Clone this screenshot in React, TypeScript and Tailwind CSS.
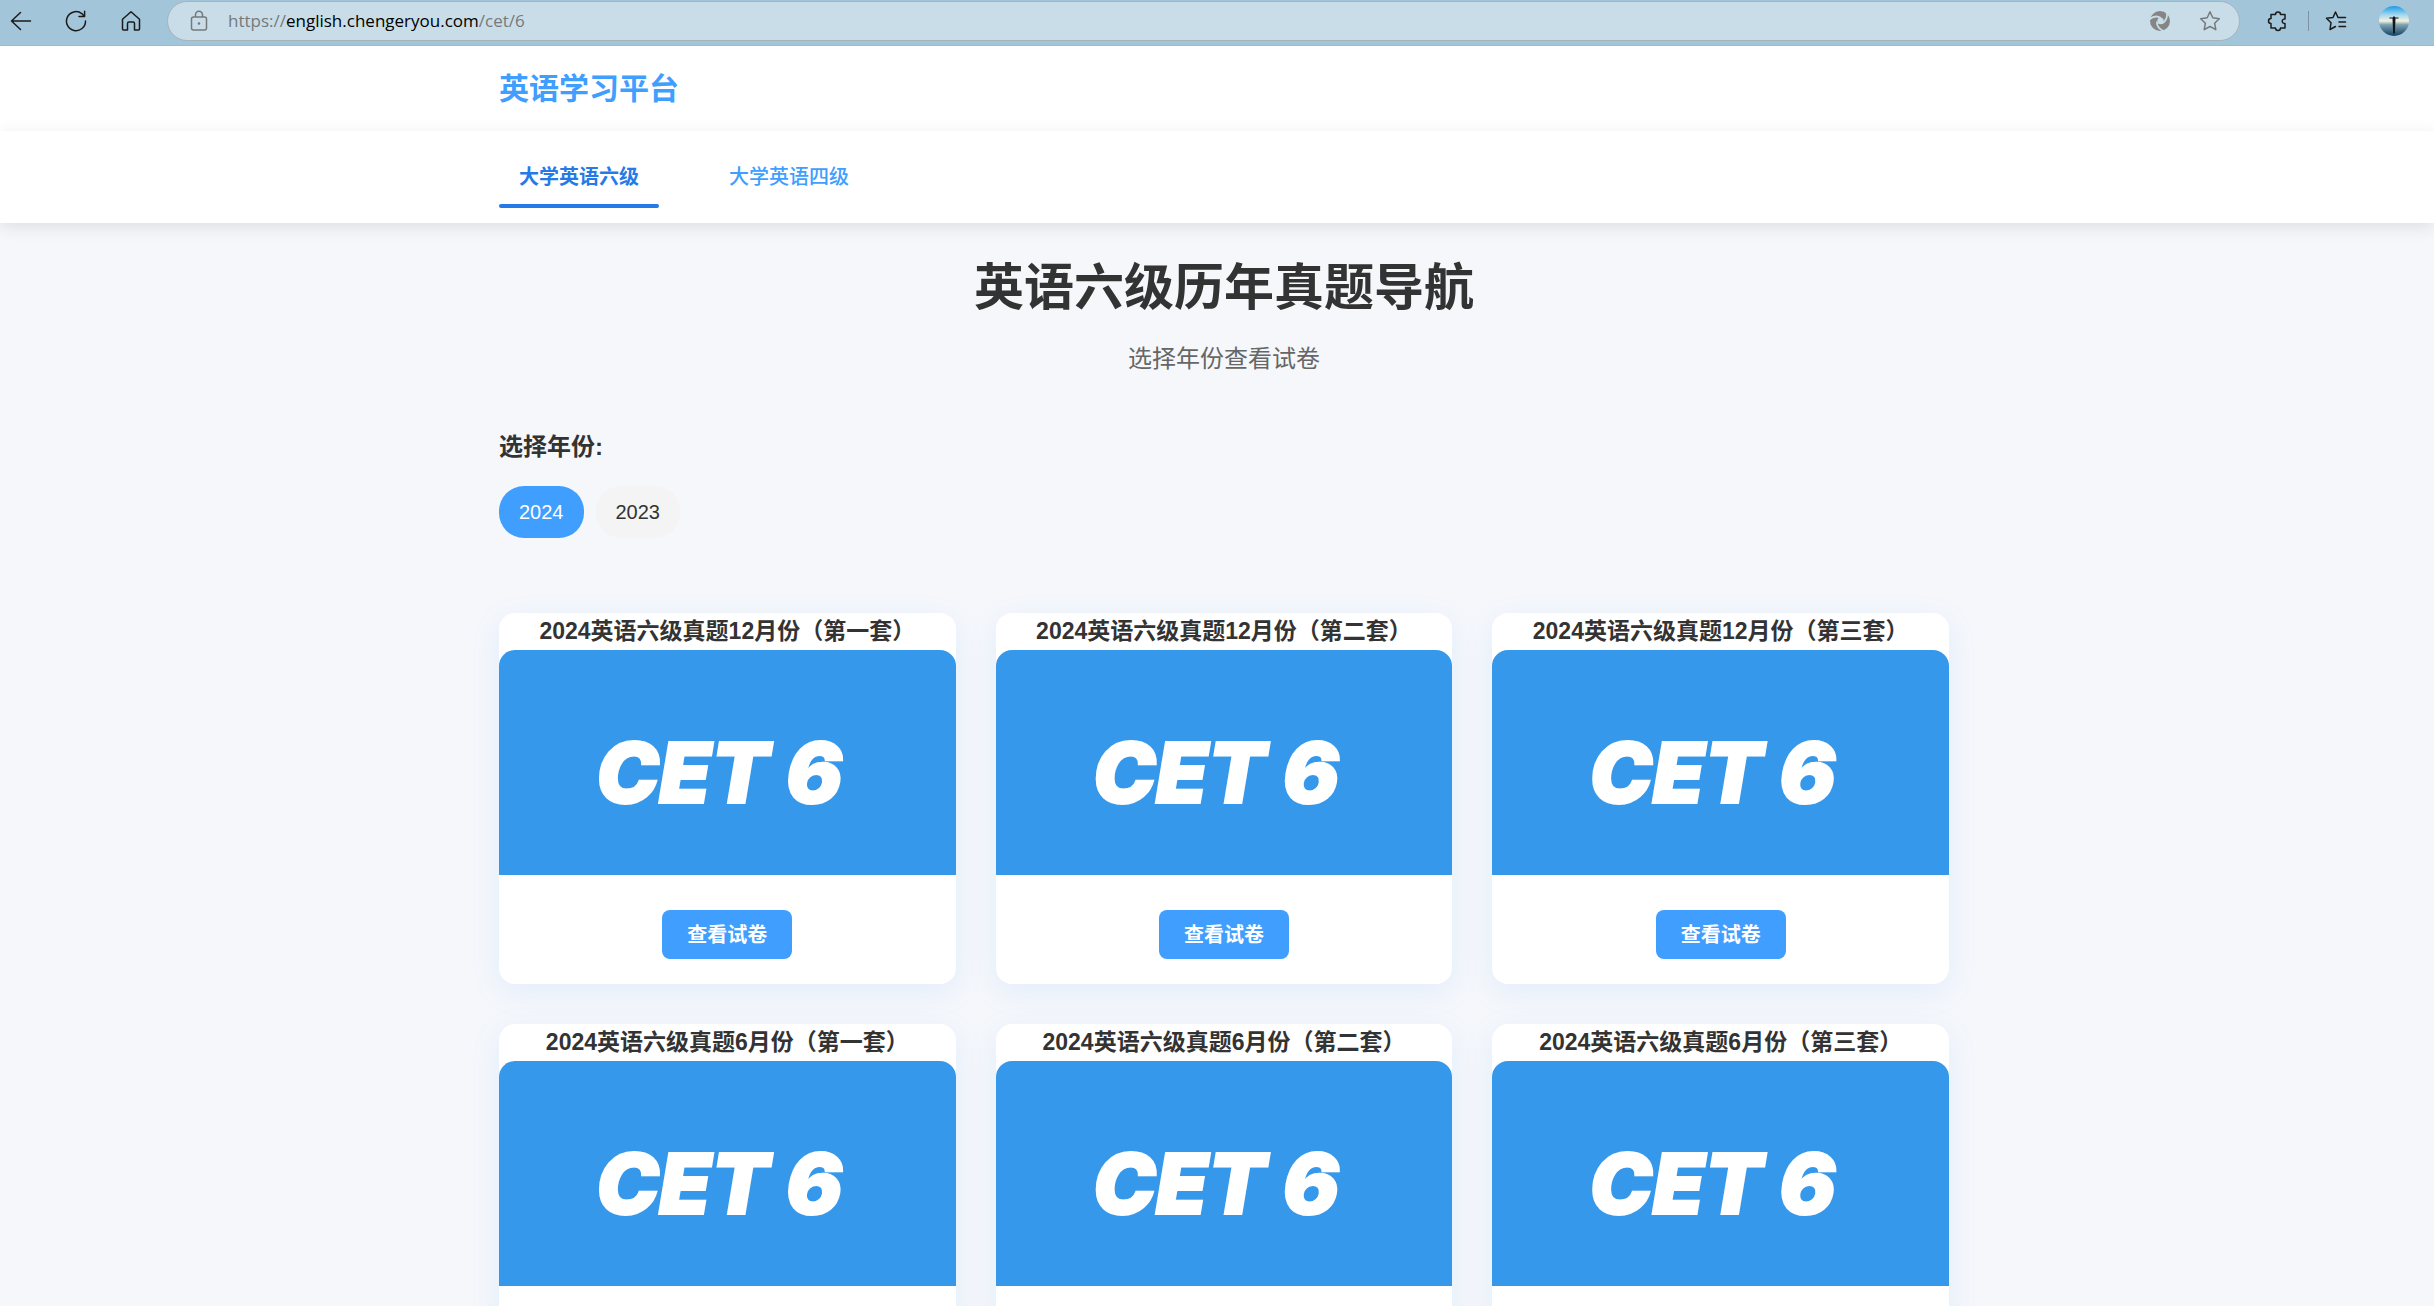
import React, { useState } from 'react';

const exams = [
  '2024英语六级真题12月份（第一套）',
  '2024英语六级真题12月份（第二套）',
  '2024英语六级真题12月份（第三套）',
  '2024英语六级真题6月份（第一套）',
  '2024英语六级真题6月份（第二套）',
  '2024英语六级真题6月份（第三套）',
];

const years = ['2024', '2023'];

function BrowserBar() {
  return (
    <div className="flex h-[46px] flex-none items-start border-b border-[#9bb9d0] bg-[#a3c5da] pr-[25px] pl-[10px] text-[#1b1b1b]">
      <div className="flex h-[42px] flex-none items-center">
        <button type="button" aria-label="后退" className="w-[54px]">
          <svg width="22" height="22" viewBox="0 0 22 22" fill="none" stroke="currentColor" strokeWidth="1.5" strokeLinecap="round" strokeLinejoin="round">
            <path d="M20.5 11H1.5M10.500 2.5L1.5 11l9 8.500" />
          </svg>
        </button>
        <button type="button" aria-label="刷新" className="w-[57px]">
          <svg width="24" height="22" viewBox="0 0 24 22" fill="none" stroke="currentColor" strokeWidth="1.5" strokeLinecap="round" strokeLinejoin="round">
            <path d="M21.5 11A9.500 9.500 0 1 1 17.800 3.600L20.600 6.500M20.600 1.200v5.300h-5.600" />
          </svg>
        </button>
        <button type="button" aria-label="主页" className="w-[46px]">
          <svg width="20" height="22" viewBox="0 0 20 22" fill="none" stroke="currentColor" strokeWidth="1.5" strokeLinejoin="round">
            <path d="M1.5 9.300L10 1.800l8.500 7.500v9.700a1 1 0 0 1-1 1h-4v-6.500a1.500 1.500 0 0 0-1.500-1.500h-4a1.500 1.500 0 0 0-1.500 1.500V20h-4a1 1 0 0 1-1-1z" />
          </svg>
        </button>
      </div>
      <div className="mt-px flex h-10 min-w-0 flex-1 items-center rounded-full border border-[#a5b3bf] bg-[#c9dde8] pr-[18px] pl-[22px] text-[#76797b]">
        <svg width="18" height="22" viewBox="0 0 18 22" fill="none" stroke="currentColor" strokeWidth="1.5" className="flex-none">
          <rect x="1.5" y="7" width="15" height="13" rx="2" />
          <path d="M5.500 7V4.800a3.500 3.500 0 0 1 7 0V7" />
          <circle cx="9" cy="13.500" r="1.300" fill="currentColor" stroke="none" />
        </svg>
        <a href="https://english.chengeryou.com/cet/6" className="ml-5 flex-1 font-['Open_Sans','Noto_Sans',sans-serif] text-[17px]">
          https://<span className="text-black">english.chengeryou.com</span>/cet/6
        </a>
        <button type="button" aria-label="扩展" className="w-[50px]">
          <svg width="22" height="22" viewBox="0 0 22 22">
            <circle cx="11" cy="11" r="10" fill="#858585" />
            <g fill="none" stroke="#c9dde8" strokeWidth="1.800">
              <path d="M12 8C8.500 5.800 4 6.200 0 9.500" />
              <path d="M12 8C8.500 5.800 4 6.200 0 9.500" transform="rotate(120 11 11)" />
              <path d="M12 8C8.500 5.800 4 6.200 0 9.500" transform="rotate(240 11 11)" />
            </g>
            <circle cx="11.500" cy="11" r="3.200" fill="#c9dde8" />
          </svg>
        </button>
        <button type="button" aria-label="收藏" className="w-[22px]">
          <svg width="22" height="22" viewBox="0 0 22 22" fill="none" stroke="currentColor" strokeWidth="1.5" strokeLinejoin="round">
            <path d="M11 1.800l2.800 6 6.500.9-4.700 4.500 1.200 6.500L11 16.500l-5.800 3.200 1.200-6.500L1.700 8.700l6.500-.9z" />
          </svg>
        </button>
      </div>
      <div className="flex h-[42px] flex-none items-center pl-[27px]">
        <button type="button" aria-label="插件" className="w-[41px]">
          <svg width="22" height="22" viewBox="0 0 22 22" fill="none" stroke="currentColor" strokeWidth="1.5" strokeLinejoin="round">
            <path d="M4 4.500h4.500a2.500 2.500 0 0 1 5 0H18v4.500a2.300 2.300 0 1 0 0 4.500V18h-4.500a2.500 2.500 0 0 1-5 0H4v-4.500a2.500 2.500 0 0 1 0-5z" />
          </svg>
        </button>
        <span className="h-5 w-px bg-[#7d93a2]" />
        <button type="button" aria-label="收藏夹" className="ml-4 w-[54px]">
          <svg width="22" height="22" viewBox="0 0 22 22" fill="none" stroke="currentColor" strokeWidth="1.5" strokeLinecap="round" strokeLinejoin="round">
            <path d="M14 7.500h-1L10.500 2 8 7.500l-6.500.8 4.500 4.500-1 6.700 5.500-3M14 7.500h6.500M14 12h6.500M14 16.500h6.500" />
          </svg>
        </button>
        <button type="button" aria-label="用户" className="size-[30px] overflow-hidden rounded-full">
          <svg width="30" height="30" viewBox="0 0 30 30">
            <defs>
              <linearGradient id="sky" x1="0" y1="0" x2="0" y2="1">
                <stop offset="0" stopColor="#1b9be6" />
                <stop offset="0.3" stopColor="#a5d8f0" />
                <stop offset="0.5" stopColor="#f4f1dc" />
                <stop offset="0.62" stopColor="#7fa3b5" />
                <stop offset="1" stopColor="#123f63" />
              </linearGradient>
            </defs>
            <rect width="30" height="30" fill="url(#sky)" />
            <path d="M10.500 11.500h3.200l1.300-1.500 1.300 1.500h3.200v1h-3l-.3 7-.3 8h-1.800l-.3-8-.3-7h-3z" fill="#10161c" />
          </svg>
        </button>
      </div>
    </div>
  );
}

function ExamCard({ title }: { title: string }) {
  return (
    <article className="rounded-2xl bg-white text-center shadow-[0_8px_30px_rgba(64,158,255,0.1)]">
      <h3 className="text-[23px] leading-[37px] font-bold text-[#333333]">{title}</h3>
      <div className="flex h-[225px] items-center justify-center rounded-t-2xl bg-[#3698ea] pt-5 pr-4">
        <span className="font-['Inter',sans-serif] text-[84px] leading-none font-black text-white italic [-webkit-text-stroke:2px_white]">
          CET 6
        </span>
      </div>
      <div className="px-6 pt-[35px] pb-[25px]">
        <button type="button" className="mx-auto block h-[49px] rounded-lg bg-[#409eff] px-[25px] pt-px text-xl font-bold text-white">
          查看试卷
        </button>
      </div>
    </article>
  );
}

export default function App() {
  const [year, setYear] = useState('2024');
  return (
    <div className="flex h-screen flex-col bg-[#f5f7fb] font-['Liberation_Sans','Noto_Sans_CJK_SC',sans-serif] text-[#333333]">
      <BrowserBar />
      <div className="min-h-0 flex-1 overflow-y-auto [scrollbar-width:none]">
        <header className="bg-white pl-[14px]">
          <div className="mx-auto flex h-[85px] max-w-[1450px] items-center">
            <a href="#" className="text-3xl font-bold text-[#409eff]">英语学习平台</a>
          </div>
        </header>
        <nav className="relative bg-white pl-[14px] shadow-[0_4px_16px_rgba(0,0,0,0.1)]">
          <div className="mx-auto flex h-[92px] max-w-[1450px] items-center gap-[50px] text-xl">
            <a href="#cet6" className="relative flex h-[62px] items-center px-5 font-bold text-[#257ae8]">
              大学英语六级
              <span className="absolute inset-x-0 bottom-0 h-1 rounded-full bg-[#257ae8]" />
            </a>
            <a href="#cet4" className="flex h-[62px] items-center px-5 font-medium text-[#409eff]">大学英语四级</a>
          </div>
        </nav>
        <main className="pl-[14px]">
          <div className="mx-auto max-w-[1450px] pt-[25px] pb-10">
            <div className="text-center">
              <h1 className="text-[50px] leading-[80px] font-bold">英语六级历年真题导航</h1>
              <p className="mt-3 text-2xl leading-[38px] text-[#666666]">选择年份查看试卷</p>
            </div>
            <h2 className="mt-[50px] text-2xl leading-[38px] font-bold">选择年份:</h2>
            <div className="mt-5 flex gap-3">
              {years.map((y) => (
                <button
                  key={y}
                  type="button"
                  onClick={() => setYear(y)}
                  className={
                    y === year
                      ? 'h-[52px] rounded-[25px] bg-[#409eff] px-5 text-xl text-white'
                      : 'h-[52px] rounded-[25px] bg-[#f4f4f5] px-5 text-xl text-[#333333]'
                  }
                >
                  {y}
                </button>
              ))}
            </div>
            <section className="mt-[75px] grid grid-cols-3 gap-10">
              {exams.map((t) => (
                <ExamCard key={t} title={t} />
              ))}
            </section>
          </div>
        </main>
      </div>
    </div>
  );
}
